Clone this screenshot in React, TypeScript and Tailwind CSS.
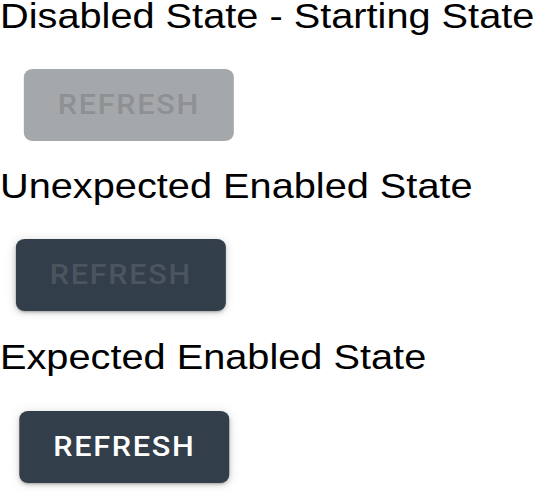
const raised =
  "shadow-[0_3px_2px_-2px_rgba(0,0,0,0.2),0_2px_4px_0_rgba(0,0,0,0.14),0_1px_10px_0_rgba(0,0,0,0.12)]";

const sections = [
  {
    title: "Disabled State - Starting State",
    button: "ml-[21px] bg-[#a5a8ab] text-[#8e9194]",
    top: "",
    gap: "mt-[37px]",
  },
  {
    title: "Unexpected Enabled State",
    button: `ml-[14px] bg-[#323e49] text-[#4a5560] ${raised}`,
    top: "mt-[29px]",
    gap: "mt-[37px]",
  },
  {
    title: "Expected Enabled State",
    button: `ml-[17px] bg-[#323e4a] text-white ${raised}`,
    top: "mt-[30px]",
    gap: "mt-[38px]",
  },
];

export default function App() {
  return (
    <main className="min-h-screen bg-white text-black overflow-hidden">
      <div className="origin-top-left scale-x-[1.135] w-[470px]">
        {sections.map((s) => (
          <section key={s.title} className={s.top}>
            <h1 className="font-['Liberation_Sans',Arial,sans-serif] text-[35px] leading-[32px] whitespace-nowrap">
              {s.title}
            </h1>
            <div className={s.gap}>
              <button
                className={`${s.button} flex h-[72px] w-[185px] items-center justify-center rounded-[8px] font-['Roboto',sans-serif] text-[27px] font-medium tracking-[0.055em] uppercase`}
              >
                Refresh
              </button>
            </div>
          </section>
        ))}
      </div>
    </main>
  );
}
